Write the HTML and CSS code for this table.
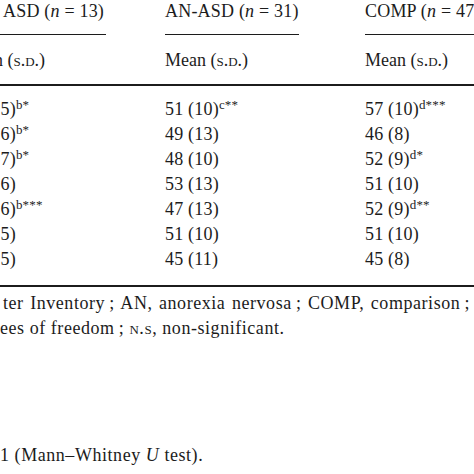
FILE: index.html
```html
<!DOCTYPE html>
<html>
<head>
<meta charset="utf-8">
<link rel="stylesheet" href="styles.css">
</head>
<body>
<div class="page">
  <div class="row head1">
    <div class="cell"><span class="hd hd-first">ASD (<i>n</i> = 13)</span></div>
    <div class="cell"><span class="hd">AN-ASD (<i>n</i> = 31)</span></div>
    <div class="cell"><span class="hd hd-last">COMP (<i>n</i> = 47)</span></div>
  </div>
  <div class="row head2">
    <div class="cell">Mean (<span class="sc">s.d.</span>)</div>
    <div class="cell">Mean (<span class="sc">s.d.</span>)</div>
    <div class="cell">Mean (<span class="sc">s.d.</span>)</div>
  </div>
  <div class="body">
    <div class="row data">
      <div class="cell">43 (15)<sup>b*</sup></div>
      <div class="cell">51 (10)<sup>c**</sup></div>
      <div class="cell">57 (10)<sup>d***</sup></div>
    </div>
    <div class="row data">
      <div class="cell">42 (16)<sup>b*</sup></div>
      <div class="cell">49 (13)</div>
      <div class="cell">46 (8)</div>
    </div>
    <div class="row data">
      <div class="cell">41 (17)<sup>b*</sup></div>
      <div class="cell">48 (10)</div>
      <div class="cell">52 (9)<sup>d*</sup></div>
    </div>
    <div class="row data">
      <div class="cell">50 (16)</div>
      <div class="cell">53 (13)</div>
      <div class="cell">51 (10)</div>
    </div>
    <div class="row data">
      <div class="cell">39 (16)<sup>b***</sup></div>
      <div class="cell">47 (13)</div>
      <div class="cell">52 (9)<sup>d**</sup></div>
    </div>
    <div class="row data">
      <div class="cell">49 (15)</div>
      <div class="cell">51 (10)</div>
      <div class="cell">51 (10)</div>
    </div>
    <div class="row data">
      <div class="cell">44 (15)</div>
      <div class="cell">45 (11)</div>
      <div class="cell">45 (8)</div>
    </div>
  </div>
</div>
<div class="notes">
  <div class="line l1">ter Inventory&#8201;; AN, anorexia nervosa&#8201;; COMP, comparison&#8201;;</div>
  <div class="line l2">ees of freedom&#8201;; <span class="sc">n.s</span>, non-significant.</div>
  <div class="line l3">1 (Mann–Whitney <i>U</i> test).</div>
</div>
</body>
</html>
```
FILE: styles.css
```css
html, body {
  margin: 0;
  padding: 0;
  background: #ffffff;
}
body {
  width: 474px;
  height: 474px;
  overflow: hidden;
  font-family: "Liberation Serif", "Times New Roman", serif;
  font-size: 18px;
  color: #1c1c1c;
}
.page {
  margin-left: -38px;
  width: 640px;
}
.row {
  display: grid;
  grid-template-columns: 203px 200px 237px;
  white-space: nowrap;
}
.head1 {
  line-height: 22px;
  letter-spacing: 0.2px;
}
.hd {
  display: inline-block;
  padding-bottom: 12px;
  border-bottom: 1px solid #1c1c1c;
}
.hd-first {
  padding-left: 41px;
  padding-right: 2px;
}
.hd-last {
  padding-right: 40px;
}
.head2 {
  line-height: 22px;
  padding-top: 14px;
  padding-bottom: 13px;
  border-bottom: 2px solid #1c1c1c;
}
.body {
  padding-top: 11px;
  padding-bottom: 13px;
  border-bottom: 2px solid #1c1c1c;
}
.data {
  line-height: 25px;
  letter-spacing: 0.2px;
}
.sc {
  font-variant: small-caps;
}
sup {
  font-size: 13px;
  line-height: 0;
  vertical-align: 6px;
}
.notes {
  padding-top: 5px;
  white-space: nowrap;
  letter-spacing: 0.55px;
}
.line {
  line-height: 23px;
}
.l1 {
  width: 467px;
  padding-left: 3px;
  text-align: justify;
  text-align-last: justify;
}
.l2 {
  margin-top: 2px;
}
.l3 {
  margin-top: 104px;
}
```
